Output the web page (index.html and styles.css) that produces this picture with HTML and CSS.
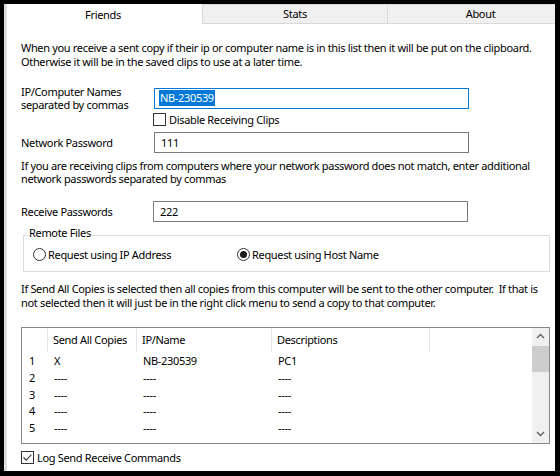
FILE: index.html
```html
<!DOCTYPE html>
<html>
<head>
<meta charset="utf-8">
<link rel="stylesheet" href="styles.css">
</head>
<body>
<div class="window">
  <div class="tabs">
    <div class="tab active">Friends</div>
    <div class="tab">Stats</div>
    <div class="tab last">About</div>
  </div>
  <div class="page">
    <p class="note note1">When you receive a sent copy if their ip or computer name is in this list then it will be put on the clipboard.<br>Otherwise it will be in the saved clips to use at a later time.</p>

    <div class="field field-ip">
      <div class="lbl">IP/Computer Names<br>separated by commas</div>
      <div class="ctl">
        <div class="input focus"><span class="sel">NB-230539</span></div>
        <div class="check check-disable"><span class="box"></span><span>Disable Receiving Clips</span></div>
      </div>
    </div>

    <div class="field field-net">
      <div class="lbl">Network Password</div>
      <div class="input"><span class="val">111</span></div>
    </div>

    <p class="note note2">If you are receiving clips from computers where your network password does not match, enter additional<br>network passwords separated by commas</p>

    <div class="field field-recv">
      <div class="lbl">Receive Passwords</div>
      <div class="input shift"><span class="val">222</span></div>
    </div>

    <div class="group">
      <span class="legend">Remote Files</span>
      <div class="radios">
        <div class="radio first"><span class="dot"></span><span>Request using IP Address</span></div>
        <div class="radio"><span class="dot on"></span><span>Request using Host Name</span></div>
      </div>
    </div>

    <p class="note note3">If Send All Copies is selected then all copies from this computer will be sent to the other computer.&nbsp; If that is<br>not selected then it will just be in the right click menu to send a copy to that computer.</p>

    <div class="list">
      <div class="grid">
        <div class="row head">
          <div class="c c0"></div>
          <div class="c c1">Send All Copies</div>
          <div class="c c2">IP/Name</div>
          <div class="c c3">Descriptions</div>
          <div class="c c4"></div>
        </div>
        <div class="row"><div class="c c0">1</div><div class="c c1">X</div><div class="c c2">NB-230539</div><div class="c c3">PC1</div><div class="c c4"></div></div>
        <div class="row"><div class="c c0">2</div><div class="c c1">----</div><div class="c c2">----</div><div class="c c3">----</div><div class="c c4"></div></div>
        <div class="row"><div class="c c0">3</div><div class="c c1">----</div><div class="c c2">----</div><div class="c c3">----</div><div class="c c4"></div></div>
        <div class="row"><div class="c c0">4</div><div class="c c1">----</div><div class="c c2">----</div><div class="c c3">----</div><div class="c c4"></div></div>
        <div class="row"><div class="c c0">5</div><div class="c c1">----</div><div class="c c2">----</div><div class="c c3">----</div><div class="c c4"></div></div>
      </div>
      <div class="scroll">
        <div class="sbtn"><svg width="9" height="6" viewBox="0 0 9 6"><polyline points="1,5 4.5,1.5 8,5" fill="none" stroke="#606060" stroke-width="1.4"/></svg></div>
        <div class="track"><div class="thumb"></div></div>
        <div class="sbtn"><svg width="9" height="6" viewBox="0 0 9 6"><polyline points="1,1 4.5,4.5 8,1" fill="none" stroke="#606060" stroke-width="1.4"/></svg></div>
      </div>
    </div>

    <div class="check check-log"><span class="box"><svg width="11" height="11" viewBox="0 0 11 11"><polyline points="1.5,5.5 4.2,8.2 9.5,2.5" fill="none" stroke="#333" stroke-width="1.1"/></svg></span><span>Log Send Receive Commands</span></div>
  </div>
</div>
</body>
</html>
```

FILE: styles.css
```css
html, body {
  margin: 0;
  background: #000;
}
body {
  font-family: "Noto Sans", "Open Sans", sans-serif;
  font-size: 11px;
  line-height: 13.33px;
  letter-spacing: -0.33px;
  color: #000;
}
.window {
  margin: 4px 0 0 4px;
  width: 551px;
  height: 467px;
  box-sizing: border-box;
  background: #fff;
  border-left: 3px solid #dcdcdc;
  overflow: hidden;
}
.tabs {
  display: flex;
  height: 20px;
}
.tab {
  flex: none;
  box-sizing: border-box;
  height: 20px;
  width: 185px;
  text-align: center;
  line-height: 17px;
  background: #f0f0f0;
  border: 1px solid #d9d9d9;
  border-right: none;
}
.tab.active {
  width: 195px;
  padding-right: 3px;
  background: #fff;
  border: none;
  padding-top: 4px;
  line-height: 13px;
}
.tab.last {
  width: 186px;
}
.page {
  padding: 0 5px 0 14px;
}
.note {
  margin: 0;
  white-space: nowrap;
}
.note1 { margin-top: 17.4px; }
.note2 { margin-top: 6.1px; }
.note3 { margin-top: 10px; }

.field {
  display: flex;
}
.field-ip {
  margin-top: 17px;
  align-items: flex-start;
}
.field-net {
  margin-top: 6px;
  align-items: center;
}
.field-recv {
  margin-top: 15.2px;
  align-items: center;
}
.lbl {
  width: 133px;
  flex: none;
}
.ctl {
  display: flex;
  flex-direction: column;
}
.field-ip .input {
  margin-top: 2.93px;
}
.input {
  box-sizing: border-box;
  width: 315px;
  height: 21px;
  border: 1px solid #7a7a7a;
  display: flex;
  align-items: center;
  padding-left: 6px;
}
.input.shift {
  margin-left: -1px;
}
.input.focus {
  border-color: #0078d7;
  padding-left: 4px;
}
.sel {
  background: #0078d7;
  color: #fff;
  line-height: 16px;
  padding: 0 1px;
}
.check {
  display: flex;
  align-items: center;
  height: 13px;
}
.check-disable {
  margin-top: 4px;
  margin-left: -1px;
}
.box {
  box-sizing: border-box;
  width: 13px;
  height: 13px;
  border: 1px solid #333;
  flex: none;
  margin-right: 3px;
  display: flex;
  align-items: center;
  justify-content: center;
  background: #fff;
}
.check-log {
  margin-top: 7px;
}

.group {
  margin-top: 13px;
  margin-left: 2px;
  border: 1px solid #dcdcdc;
  padding: 0 0 10px 9px;
}
.legend {
  display: table;
  margin-top: -9.9px;
  margin-left: -5px;
  padding: 0 1px;
  background: #fff;
}
.radios {
  display: flex;
  margin-top: 9px;
}
.radio {
  display: flex;
  align-items: center;
  height: 13px;
}
.radio.first {
  width: 204px;
}
.dot {
  box-sizing: border-box;
  width: 13px;
  height: 13px;
  border: 1px solid #333;
  border-radius: 50%;
  margin-right: 2px;
  display: flex;
  align-items: center;
  justify-content: center;
  flex: none;
}
.dot.on::after {
  content: "";
  width: 7px;
  height: 7px;
  border-radius: 50%;
  background: #1a1a1a;
}

.list {
  margin-top: 17.9px;
  height: 117px;
  box-sizing: border-box;
  border: 1px solid #828790;
  display: flex;
}
.grid {
  flex: 1;
  overflow: hidden;
}
.row {
  display: grid;
  grid-template-columns: 26px 89px 135px 158px 1fr;
  height: 16.67px;
  line-height: 16.67px;
}
.row.head {
  height: 24px;
  line-height: 24px;
  margin-bottom: 1.4px;
}
.c {
  padding-left: 6px;
  white-space: nowrap;
  overflow: hidden;
}
.c0 {
  padding-left: 7px;
}
.head .c0, .head .c1, .head .c2, .head .c3 {
  border-right: 1px solid #e5e5e5;
}
.head .c1, .head .c2, .head .c3 {
  padding-left: 5px;
}
.scroll {
  width: 17px;
  flex: none;
  background: #f0f0f0;
  display: flex;
  flex-direction: column;
}
.sbtn {
  height: 17px;
  display: flex;
  align-items: center;
  justify-content: center;
  flex: none;
}
.track {
  flex: 1;
}
.thumb {
  height: 26px;
  margin-top: 1px;
  background: #cdcdcd;
}
```
